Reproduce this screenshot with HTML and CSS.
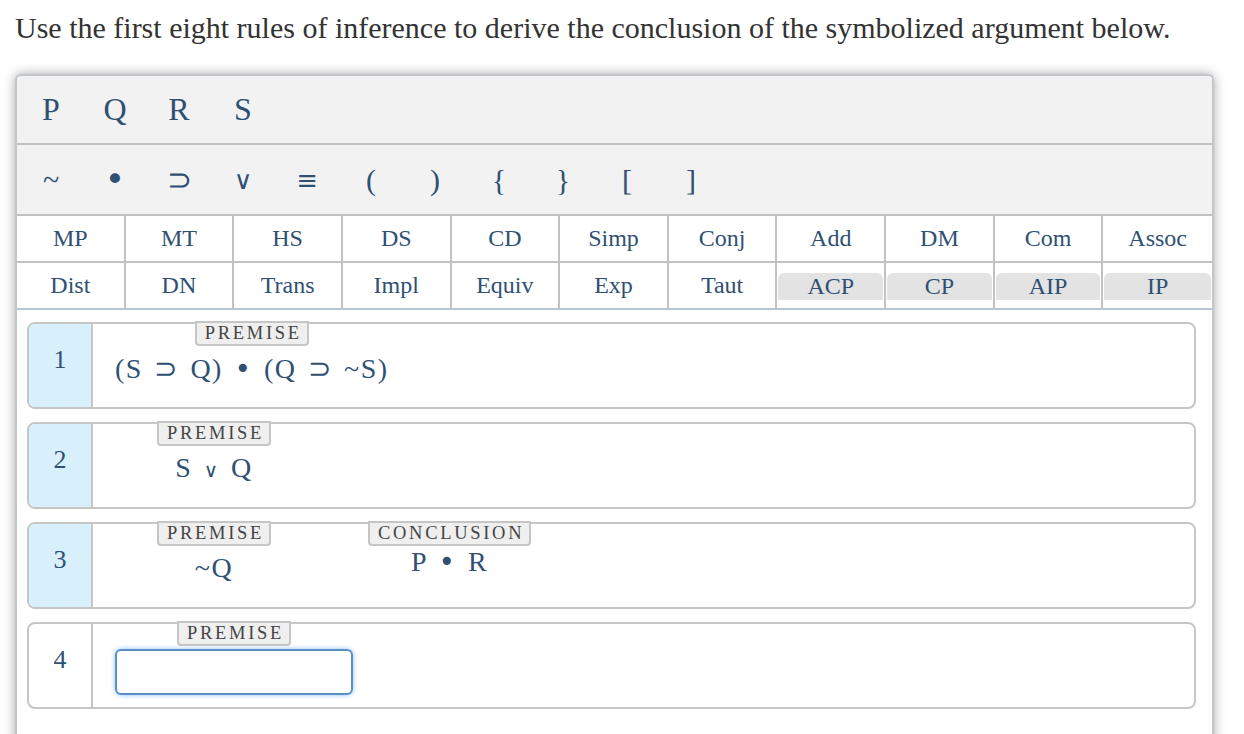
FILE: index.html
```html
<!DOCTYPE html>
<html lang="en">
<head>
    <meta charset="UTF-8">
    <title>Derivation</title>
    <link rel="stylesheet" href="styles.css">
</head>
<body>

<p class="prompt">Use the first eight rules of inference to derive the conclusion of the symbolized argument below.</p>

<div class="panel">
    <!-- variables -->
    <div class="keys keys-vars">
        <span class="key">P</span>
        <span class="key">Q</span>
        <span class="key">R</span>
        <span class="key">S</span>
    </div>

    <!-- operators and brackets -->
    <div class="keys keys-ops">
        <span class="key">~</span>
        <span class="key dot">•</span>
        <span class="key">⊃</span>
        <span class="key op-sans">∨</span>
        <span class="key op-sans">≡</span>
        <span class="key">(</span>
        <span class="key">)</span>
        <span class="key">{</span>
        <span class="key">}</span>
        <span class="key">[</span>
        <span class="key">]</span>
    </div>

    <!-- rules -->
    <div class="rules">
        <div class="rule">MP</div>
        <div class="rule">MT</div>
        <div class="rule">HS</div>
        <div class="rule">DS</div>
        <div class="rule">CD</div>
        <div class="rule">Simp</div>
        <div class="rule">Conj</div>
        <div class="rule">Add</div>
        <div class="rule">DM</div>
        <div class="rule">Com</div>
        <div class="rule">Assoc</div>
        <div class="rule">Dist</div>
        <div class="rule">DN</div>
        <div class="rule">Trans</div>
        <div class="rule">Impl</div>
        <div class="rule">Equiv</div>
        <div class="rule">Exp</div>
        <div class="rule">Taut</div>
        <div class="rule"><span class="rule-btn">ACP</span></div>
        <div class="rule"><span class="rule-btn">CP</span></div>
        <div class="rule"><span class="rule-btn">AIP</span></div>
        <div class="rule"><span class="rule-btn">IP</span></div>
    </div>

    <!-- proof lines -->
    <div class="lines">
        <div class="line">
            <div class="num given">1</div>
            <div class="body">
                <div class="cell">
                    <span class="tag">PREMISE</span>
                    <span class="formula">(S ⊃ Q) <span class="dot">•</span> (Q ⊃ ~S)</span>
                </div>
            </div>
        </div>

        <div class="line">
            <div class="num given">2</div>
            <div class="body">
                <div class="cell">
                    <span class="tag">PREMISE</span>
                    <span class="formula">S <span class="op-sans">∨</span> Q</span>
                </div>
            </div>
        </div>

        <div class="line">
            <div class="num given">3</div>
            <div class="body">
                <div class="cell">
                    <span class="tag">PREMISE</span>
                    <span class="formula">~Q</span>
                </div>
                <div class="cell cell-conclusion">
                    <span class="tag">CONCLUSION</span>
                    <span class="formula formula-conclusion">P <span class="dot">•</span> R</span>
                </div>
            </div>
        </div>

        <div class="line">
            <div class="num">4</div>
            <div class="body">
                <div class="cell">
                    <span class="tag">PREMISE</span>
                    <input class="entry" type="text">
                </div>
            </div>
        </div>
    </div>
</div>

</body>
</html>
```

FILE: styles.css
```css
body {
    margin: 0;
    padding: 0 15px;
    background-color: white;
    font-family: "Liberation Serif", "Times New Roman", serif;
    overflow: hidden;
}

.prompt {
    margin: 11px 0 0;
    font-size: 30px;
    color: #333;
    line-height: 34px;
}

.panel {
    margin-top: 29px;
    width: 1195px;
    border: 2px solid #c2c6ca;
    border-bottom: none;
    border-radius: 6px 6px 0 0;
    box-shadow: 0 0 12px rgba(0, 0, 0, 0.35);
    background-color: white;
    color: #2f5073;
    height: 700px;
}

.keys {
    display: flex;
    padding-left: 2px;
    background-color: #f2f2f2;
    border-bottom: 2px solid #c2c2c2;
}

.keys-vars {
    height: 67px;
    align-items: center;
    font-size: 32px;
    border-radius: 5px 5px 0 0;
}

.keys-ops {
    height: 69px;
    align-items: center;
    font-size: 30px;
}

.key {
    width: 64px;
    text-align: center;
}

.dot {
    font-family: "DejaVu Sans", sans-serif;
    font-size: 1.15em;
    line-height: 1;
}

.formula .dot {
    font-size: 1em;
}

.op-sans {
    font-family: "DejaVu Sans", sans-serif;
    font-size: 0.85em;
}

.formula .op-sans {
    font-size: 0.7em;
}

.rules {
    display: grid;
    grid-template-columns: repeat(11, 1fr);
}

.rule {
    height: 45px;
    display: flex;
    font-size: 24px;
    border-right: 2px solid #c2c2c2;
    border-bottom: 2px solid #c2c2c2;
}

.rule:nth-child(11n) {
    border-right: none;
}

.rule:nth-child(n+12) {
    border-bottom-color: #b8c4d0;
}

.rule, .rule-btn {
    align-items: center;
    justify-content: center;
}

.rule-btn {
    display: flex;
    flex: 1;
    margin: 2px 1px 0;
    background-color: #e3e3e3;
    border-radius: 6px 6px 0 0;
}

.lines {
    padding: 12px 16px 0 10px;
}

.line {
    display: flex;
    height: 83px;
    margin-bottom: 13px;
    border: 2px solid #c6c6c6;
    border-radius: 8px;
}

.num {
    width: 64px;
    border-right: 2px solid #c6c6c6;
    border-radius: 6px 0 0 6px;
    text-align: center;
    font-size: 26px;
    padding-top: 21px;
    box-sizing: border-box;
}

.num.given {
    background-color: #d8effc;
}

.body {
    display: flex;
    padding-left: 22px;
}

.cell {
    display: flex;
    flex-direction: column;
    align-items: center;
    min-width: 198px;
}

.cell-conclusion {
    margin-left: 55px;
    min-width: 0;
}

.tag {
    margin-top: -3px;
    padding: 0 5px 0 8px;
    background-color: #efefef;
    border: 2px solid #c6c6c6;
    border-radius: 0 0 4px 4px;
    font-size: 18.5px;
    letter-spacing: 2.7px;
    line-height: 21px;
    color: #444;
}

.formula {
    margin-top: 6px;
    font-size: 28px;
    letter-spacing: 1.5px;
    word-spacing: 3px;
    white-space: nowrap;
}

.formula-conclusion {
    margin-top: 0;
}

.entry {
    margin-top: 3px;
    width: 238px;
    height: 46px;
    box-sizing: border-box;
    border: 2px solid #5d8fc6;
    border-radius: 6px;
    box-shadow: 0 0 5px #8cc2ff;
    outline: none;
}
```
